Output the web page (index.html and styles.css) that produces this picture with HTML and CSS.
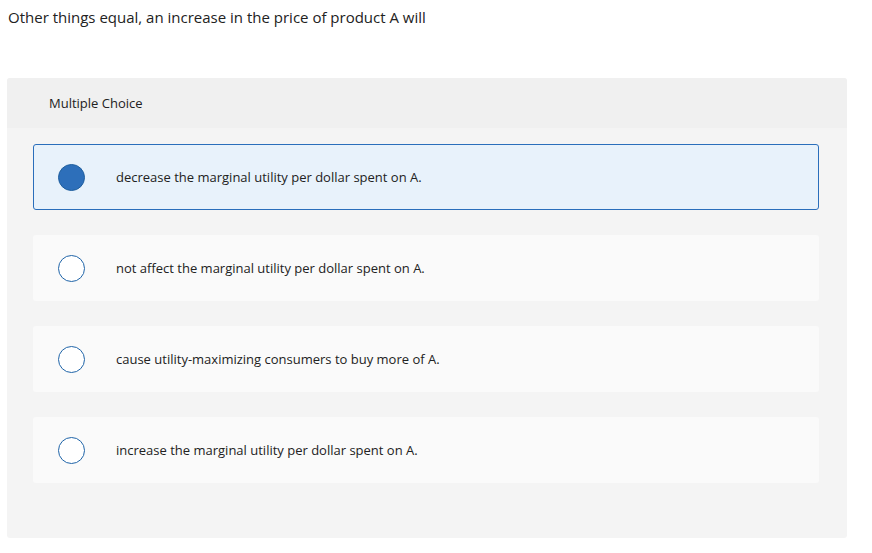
FILE: index.html
```html
<!DOCTYPE html>
<html lang="en">
<head>
<meta charset="utf-8">
<title>Multiple Choice</title>
<link rel="stylesheet" href="styles.css">
</head>
<body>
<p class="question">Other things equal, an increase in the price of product A will</p>
<section class="panel">
  <header class="panel-head">Multiple Choice</header>
  <div class="options">
    <label class="option selected"><span class="radio"></span><span class="opt-text">decrease the marginal utility per dollar spent on A.</span></label>
    <label class="option"><span class="radio"></span><span class="opt-text">not affect the marginal utility per dollar spent on A.</span></label>
    <label class="option"><span class="radio"></span><span class="opt-text">cause utility-maximizing consumers to buy more of A.</span></label>
    <label class="option"><span class="radio"></span><span class="opt-text">increase the marginal utility per dollar spent on A.</span></label>
  </div>
</section>
</body>
</html>
```
FILE: styles.css
```css
html, body {
  margin: 0;
  padding: 0;
  background: #ffffff;
}
body {
  font-family: "Open Sans", "Liberation Sans", sans-serif;
  color: #222222;
  width: 872px;
  height: 553px;
  overflow: hidden;
}
.question {
  margin: 0;
  padding: 7px 0 0 8px;
  font-size: 15px;
  line-height: 20px;
  height: 70px;
  box-sizing: border-box;
}
.panel {
  margin: 8px 0 0 7px;
  width: 840px;
  height: 460px;
  background: #f4f4f4;
  border-radius: 3px;
  overflow: hidden;
}
.panel-head {
  height: 50px;
  background: #f0f0f0;
  display: flex;
  align-items: center;
  padding-left: 42px;
  font-size: 13px;
}
.options {
  padding: 16px 28px 0 26px;
  display: flex;
  flex-direction: column;
  gap: 25px;
}
.option {
  height: 66px;
  box-sizing: border-box;
  background: #fafafa;
  border: 1px solid transparent;
  border-radius: 3px;
  display: flex;
  align-items: center;
  padding-left: 24px;
  font-size: 13px;
}
.option.selected {
  background: #e8f2fb;
  border-color: #2a6ebb;
}
.radio {
  width: 27px;
  height: 27px;
  box-sizing: border-box;
  border: 1.5px solid #1f64a8;
  border-radius: 50%;
  background: #ffffff;
  flex: none;
}
.option.selected .radio {
  background: #2d6fba;
  border-color: #1f5f9e;
}
.opt-text {
  margin-left: 31px;
}
```
